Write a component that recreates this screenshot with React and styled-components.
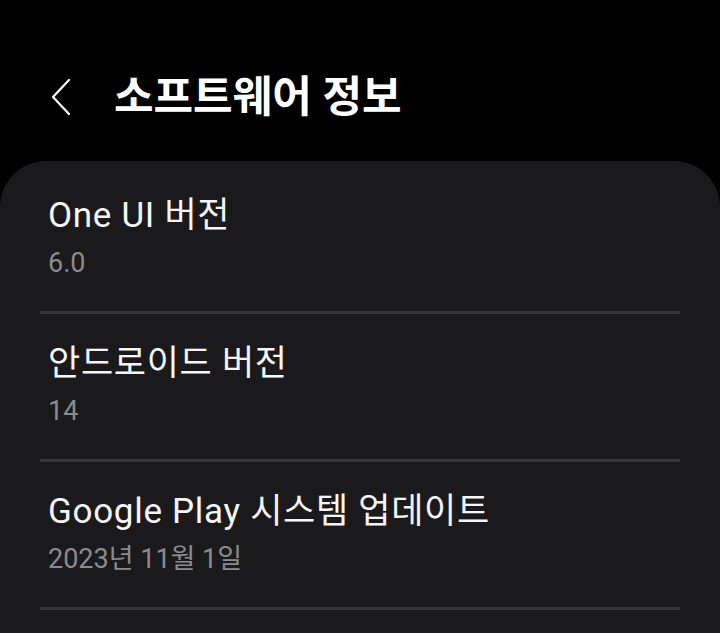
import styled, { createGlobalStyle } from 'styled-components'

const GlobalStyle = createGlobalStyle`
    html, body {
        margin: 0;
        padding: 0;
        background: #000;
    }
    body {
        font-family: Roboto, "Noto Sans CJK KR", sans-serif;
        -webkit-font-smoothing: antialiased;
    }
`

const Screen = styled.div`
    width: 720px;
    height: 633px;
    overflow: hidden;
    background: #000;
    display: flex;
    flex-direction: column;
`

const Header = styled.header`
    height: 161px;
    display: flex;
    align-items: flex-start;
    padding: 72px 0 0 46px;
    box-sizing: border-box;
    gap: 38px;
`

const BackButton = styled.button`
    background: none;
    border: 0;
    padding: 0;
    width: 30px;
    height: 50px;
    display: flex;
    align-items: center;
    justify-content: center;
    color: #fff;
`

const Title = styled.h1`
    margin: 0;
    font-size: 43px;
    line-height: 50px;
    font-weight: 700;
    color: #fff;
    letter-spacing: 0;
`

const Card = styled.section`
    flex: 1;
    background: #1a1a1c;
    border-radius: 46px 46px 0 0;
    padding-top: 5px;
`

const Item = styled.div`
    padding: 28px 48px 31px;
    display: flex;
    flex-direction: column;
`

const ItemTitle = styled.div`
    font-size: 35px;
    line-height: 44px;
    color: #f5f5f5;
    letter-spacing: 0.7px;
`

const ItemValue = styled.div`
    font-size: 27px;
    line-height: 34px;
    color: #8b8b8d;
    margin-top: 8px;
`

const Divider = styled.div`
    height: 3px;
    margin: 0 40px;
    background: #37373a;
`

const items = [
    { title: 'One UI 버전', value: '6.0' },
    { title: '안드로이드 버전', value: '14' },
    { title: 'Google Play 시스템 업데이트', value: '2023년 11월 1일' },
]

const App = () => {
    return (
        <Screen>
            <GlobalStyle />
            <Header>
                <BackButton aria-label="뒤로">
                    <svg width="26" height="40" viewBox="0 0 26 40" fill="none">
                        <path d="M21 3 L5 20 L21 37" stroke="#fff" strokeWidth="2.2" strokeLinecap="round" strokeLinejoin="round" />
                    </svg>
                </BackButton>
                <Title>소프트웨어 정보</Title>
            </Header>
            <Card>
                {items.map(item => (
                    <div key={item.title}>
                        <Item>
                            <ItemTitle>{item.title}</ItemTitle>
                            <ItemValue>{item.value}</ItemValue>
                        </Item>
                        <Divider />
                    </div>
                ))}
            </Card>
        </Screen>
    )
}

export default App
